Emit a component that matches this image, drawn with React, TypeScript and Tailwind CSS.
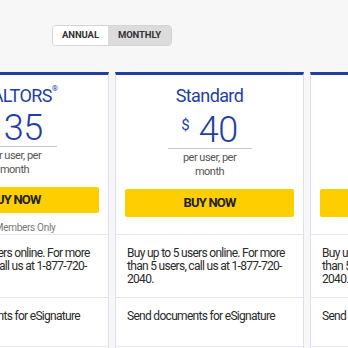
import React from "react";

type Plan = { title: React.ReactNode; price: string; note?: string };

const plans: Plan[] = [
  {
    title: (
      <>
        REALTORS<sup className="text-[8px] align-super">®</sup>
      </>
    ),
    price: "35",
    note: "NAR Members Only",
  },
  { title: "Standard", price: "40" },
  { title: "Business Pro", price: "65" },
];

function Card({ plan }: { plan: Plan }) {
  return (
    <div className="w-[189px] shrink-0 bg-white border-t-[3px] border-t-[#1f3ea6] border-x border-x-[#dbe1f1] flex flex-col">
      <div className="h-[159px] px-[9px] flex flex-col items-center">
        <div className="pt-[9px] h-[38px] text-[18px] leading-[24px] text-[#1f3ea6] tracking-[-0.6px] whitespace-nowrap">
          {plan.title}
        </div>
        <div className="w-[84px] border-b border-[#c8c8c8] flex justify-center items-start h-[36px]">
          <span className="text-[15px] leading-[18px] text-[#1f3ea6] mt-[3px] mr-[9px]">$</span>
          <span className="text-[36px] leading-[35px] font-light text-[#1f3ea6] tracking-[-0.5px]">
            {plan.price}
          </span>
        </div>
        <div className="mt-[2px] text-[11px] leading-[14px] text-[#555] text-center tracking-[-0.5px] w-[84px]">
          per user, per month
        </div>
        <div className="mt-[10px] w-full h-[28px] bg-[#ffce00] rounded-[2px] flex items-center justify-center text-[13px] font-bold text-[#222] tracking-[-0.8px]">
          BUY NOW
        </div>
        {plan.note && (
          <div className="mt-[9px] text-[10px] leading-[12px] text-[#777] tracking-[-0.3px] whitespace-nowrap">
            {plan.note}
          </div>
        )}
      </div>
      <div className="border-t border-[#e3e7f1] px-[11px] pt-[12px] h-[63px] text-[12px] leading-[13px] text-[#2a2a2a] tracking-[-0.7px]">
        Buy up to 5 users online. For more than 5 users, call us at 1-877-720-2040.
      </div>
      <div className="border-t border-[#e3e7f1] px-[11px] pt-[12px] h-[49px] text-[12px] leading-[13px] text-[#2a2a2a] tracking-[-0.7px]">
        Send documents for eSignature
      </div>
      <div className="border-t border-[#e3e7f1] h-[40px]" />
    </div>
  );
}

export default function App() {
  return (
    <div className="w-[348px] h-[348px] overflow-hidden bg-[#f7f7f7] font-['Roboto',sans-serif]">
      <div className="pt-[25px] pl-[52px]">
        <div className="flex w-[120px] h-[21px] rounded-[4px] border border-[#d4d4d4] overflow-hidden text-[9.5px] font-bold text-[#333] tracking-[-0.1px]">
          <div className="w-[55px] bg-white flex items-center justify-center">ANNUAL</div>
          <div className="flex-1 bg-[#dcdcdc] flex items-center justify-center">MONTHLY</div>
        </div>
      </div>
      <div className="mt-[26px] ml-[-80px] flex gap-[6px]">
        {plans.map((p, i) => (
          <Card key={i} plan={p} />
        ))}
      </div>
    </div>
  );
}
